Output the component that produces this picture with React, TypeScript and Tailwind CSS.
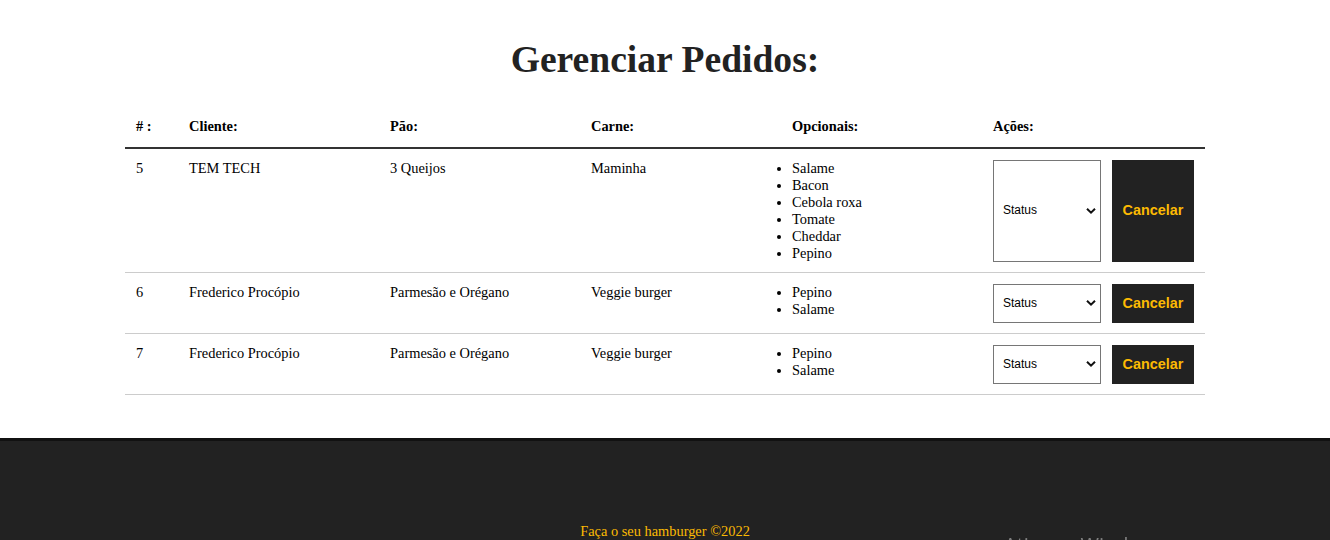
import React from "react";

type Order = {
  id: number;
  cliente: string;
  pao: string;
  carne: string;
  opcionais: string[];
};

const ORDERS: Order[] = [
  { id: 5, cliente: "TEM TECH", pao: "3 Queijos", carne: "Maminha", opcionais: ["Salame", "Bacon", "Cebola roxa", "Tomate", "Cheddar", "Pepino"] },
  { id: 6, cliente: "Frederico Procópio", pao: "Parmesão e Orégano", carne: "Veggie burger", opcionais: ["Pepino", "Salame"] },
  { id: 7, cliente: "Frederico Procópio", pao: "Parmesão e Orégano", carne: "Veggie burger", opcionais: ["Pepino", "Salame"] },
];

const COLS = "grid grid-cols-[53px_201px_201px_201px_201px_1fr]";

const Chevron = () => (
  <svg width="10" height="7" viewBox="0 0 10 7" className="pointer-events-none absolute right-[5px] top-1/2 -translate-y-1/2">
    <path d="M1 1.2 L5 5.2 L9 1.2" fill="none" stroke="#111" strokeWidth="2" />
  </svg>
);

const App = () => {
  return (
    <div className="min-h-screen bg-white text-[#222] font-['Liberation_Serif','Times_New_Roman',serif] text-[14.4px] leading-[17px]">
      <main className="w-[1080px] mx-auto pt-[36px] pb-[43px]">
        <h1 className="text-center font-bold text-[37.6px] leading-[48px] text-[#222] mb-[22px]">Gerenciar Pedidos:</h1>

        <div className={`${COLS} border-b-2 border-[#333] font-bold text-black`}>
          {["# :", "Cliente:", "Pão:", "Carne:", "Opcionais:", "Ações:"].map((h) => (
            <div key={h} className="px-[11px] py-[12px]">{h}</div>
          ))}
        </div>

        {ORDERS.map((o) => (
          <div key={o.id} className={`${COLS} border-b border-[#ccc] text-black`}>
            <div className="px-[11px] py-[10.5px]">{o.id}</div>
            <div className="px-[11px] py-[10.5px]">{o.cliente}</div>
            <div className="px-[11px] py-[10.5px]">{o.pao}</div>
            <div className="px-[11px] py-[10.5px]">{o.carne}</div>
            <div className="px-[11px] py-[10.5px]">
              <ul className="list-disc">
                {o.opcionais.map((x) => (
                  <li key={x}>{x}</li>
                ))}
              </ul>
            </div>
            <div className="px-[11px] py-[10.5px] flex items-stretch gap-[11px]">
              <div className="relative w-[108px] min-h-[39px] flex">
                <select className="appearance-none w-full border border-[#767676] bg-white pl-[9px] pr-[20px] text-[12px] font-['Liberation_Sans',Arial,sans-serif] text-black outline-none">
                  <option>Status</option>
                </select>
                <Chevron />
              </div>
              <button className="w-[82px] bg-[#222] text-[#fcba03] font-bold text-[14.4px] font-['Liberation_Sans',Arial,sans-serif]">
                Cancelar
              </button>
            </div>
          </div>
        ))}
      </main>

      <footer className="bg-[#222] border-t-[3px] border-[#111] h-[180px] pt-[82px] text-center">
        <p className="text-[#fcba03]">Faça o seu hamburger ©2022</p>
      </footer>

      <span className="fixed left-[1004px] top-[532px] text-[20px] leading-[26px] text-[#808080] font-['Open_Sans',sans-serif]">
        Ativar o Windows
      </span>
    </div>
  );
};

export default App;
